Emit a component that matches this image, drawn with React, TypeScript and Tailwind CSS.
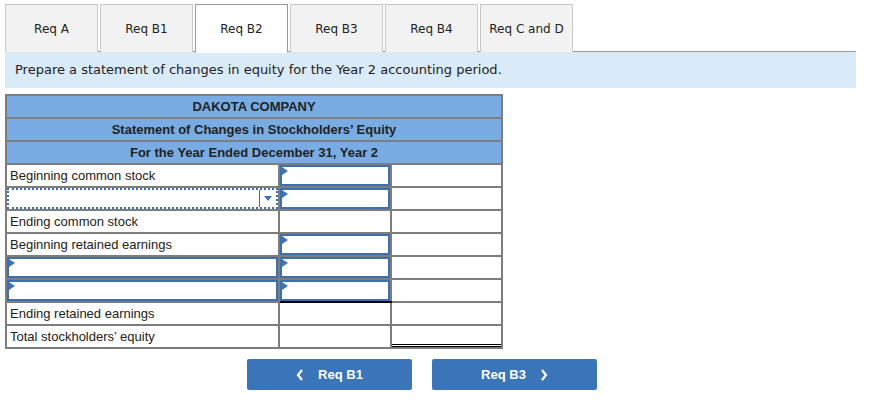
const TABS = ['Req A', 'Req B1', 'Req B2', 'Req B3', 'Req B4', 'Req C and D'];

function Marker() {
  return (
    <span className="absolute left-0 top-0 w-0 h-0 border-y-[4px] border-y-transparent border-l-[6px] border-l-[#3a74bd]" />
  );
}

function InputBox() {
  return (
    <div className="relative h-full border-2 border-[#3d6fae]">
      <Marker />
    </div>
  );
}

type Row = {
  label?: string;
  c1?: 'text' | 'select' | 'input';
  c2?: 'input' | 'plain';
  c2Bottom?: boolean;
  c3Top?: boolean;
  c3Double?: boolean;
};

const ROWS: Row[] = [
  { label: 'Beginning common stock', c1: 'text', c2: 'input' },
  { c1: 'select', c2: 'input' },
  { label: 'Ending common stock', c1: 'text', c2: 'plain' },
  { label: 'Beginning retained earnings', c1: 'text', c2: 'input' },
  { c1: 'input', c2: 'input' },
  { c1: 'input', c2: 'input', c2Bottom: true },
  { label: 'Ending retained earnings', c1: 'text', c2: 'plain' },
  { label: 'Total stockholders\u2019 equity', c1: 'text', c2: 'plain', c3Top: true, c3Double: true },
];

export default function App() {
  return (
    <div className="w-[878px] h-[404px] bg-white relative" style={{ fontFamily: 'Liberation Sans, Arial, sans-serif' }}>
      <div className="pt-[4px] pl-[5px] pr-[22px]">
        <div className="flex gap-[2px] h-[48px] border-b border-[#999] font-['DejaVu_Sans',Verdana,sans-serif] text-[12px] text-[#222]">
          {TABS.map((t) => (
            <div
              key={t}
              className={
                t === 'Req B2'
                  ? 'w-[93px] h-[49px] bg-white border border-[#999] border-b-white flex items-center justify-center'
                  : 'w-[93px] h-[48px] bg-[#f2f2f2] border border-b-0 border-[#c8c8c8] flex items-center justify-center'
              }
            >
              {t}
            </div>
          ))}
        </div>
        <div className="h-[36px] bg-[#d9eaf8] flex items-center pl-[10px] font-['DejaVu_Sans',Verdana,sans-serif] text-[13px] text-[#222]">
          Prepare a statement of changes in equity for the Year 2 accounting period.
        </div>

        <table className="mt-[6px] border-collapse text-[13px] text-[#222] table-fixed w-[496px]">
          <colgroup>
            <col className="w-[273px]" />
            <col className="w-[112px]" />
            <col className="w-[111px]" />
          </colgroup>
          <thead>
            {['DAKOTA COMPANY', 'Statement of Changes in Stockholders\u2019 Equity', 'For the Year Ended December 31, Year 2'].map((h) => (
              <tr key={h} className="h-[23px]">
                <th colSpan={3} className="border-2 border-[#7d7d7d] bg-[#78ace3] font-bold text-center p-0 leading-none">
                  {h}
                </th>
              </tr>
            ))}
          </thead>
          <tbody>
            {ROWS.map((r, i) => (
              <tr key={i} className="h-[23px]">
                <td className="border-2 border-[#7d7d7d] p-0 h-[23px]">
                  {r.c1 === 'text' && <div className="pl-[3px] leading-none">{r.label}</div>}
                  {r.c1 === 'select' && (
                    <div className="h-[21px] border-2 border-dotted border-[#3d6fae] flex justify-end">
                      <div className="w-[17px] border-l border-[#3d6fae] flex items-center justify-center">
                        <span className="w-0 h-0 border-x-[4px] border-x-transparent border-t-[5px] border-t-[#3a74bd]" />
                      </div>
                    </div>
                  )}
                  {r.c1 === 'input' && (
                    <div className="h-[21px]">
                      <InputBox />
                    </div>
                  )}
                </td>
                <td className={`border-2 border-[#7d7d7d] p-0 h-[23px] ${r.c2Bottom ? 'border-b-[#000]' : ''}`}>
                  {r.c2 === 'input' && (
                    <div className="h-[21px]">
                      <InputBox />
                    </div>
                  )}
                </td>
                <td className={`border-2 border-[#7d7d7d] p-0 h-[23px] ${r.c3Top ? 'border-t-[#000]' : ''}`}>
                  {r.c3Double && <div className="h-[21px] border-b-[3px] border-double border-black" />}
                </td>
              </tr>
            ))}
          </tbody>
        </table>

        <div className="flex pl-[242px] gap-[20px] mt-[10px] text-[13px] font-bold text-white">
          <div className="w-[165px] h-[31px] bg-[#3a75b9] rounded-[2px] flex items-center justify-center gap-[14px]">
            <svg width="8" height="12" viewBox="0 0 8 12"><path d="M6 1 L2 6 L6 11" stroke="white" strokeWidth="2.2" fill="none" /></svg>
            <span>Req B1</span>
          </div>
          <div className="w-[165px] h-[31px] bg-[#3a75b9] rounded-[2px] flex items-center justify-center gap-[14px]">
            <span>Req B3</span>
            <svg width="8" height="12" viewBox="0 0 8 12"><path d="M2 1 L6 6 L2 11" stroke="white" strokeWidth="2.2" fill="none" /></svg>
          </div>
        </div>
      </div>
    </div>
  );
}
